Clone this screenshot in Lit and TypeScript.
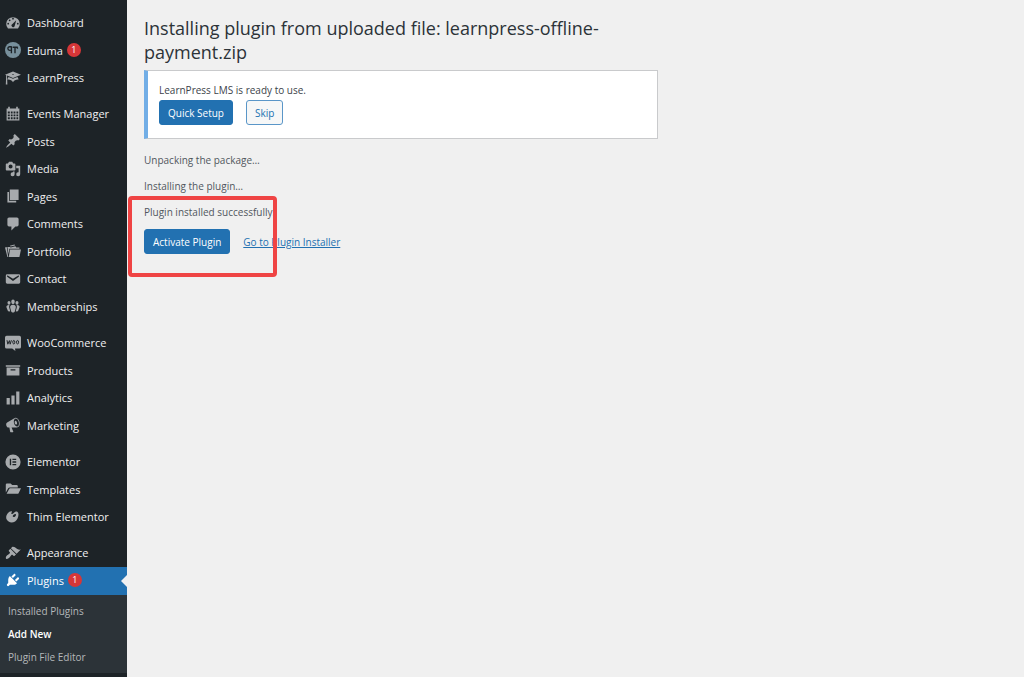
import { LitElement, html, css, svg, nothing } from "lit";
import { customElement, property } from "lit/decorators.js";

const icons: Record<string, unknown> = {
  dashboard: svg`<path fill-rule="evenodd" d="M3.760 17h12.480A8.500 8.500 0 1 0 3.760 17zM10 3.500a1.100 1.100 0 1 1 0 2.200 1.100 1.100 0 0 1 0-2.200zM5.800 5.500a1.100 1.100 0 1 1 0 2.200 1.100 1.100 0 0 1 0-2.200zM14 6.500l-2 7.500a2 2 0 1 1-3-2.500zM4 9.700a1.100 1.100 0 1 1 0 2.200 1.100 1.100 0 0 1 0-2.200zM16 9.700a1.100 1.100 0 1 1 0 2.200 1.100 1.100 0 0 1 0-2.200z"/>`,
  eduma: svg`<circle cx="10" cy="10" r="10" fill="#78909c"/><path d="M8.500 6H5.800a2.200 2.200 0 0 0 0 4.400H7M8 6v8M9.500 6.500H16M12.500 6.500V14M15.500 6.500v2" fill="none" stroke="#1d2327" stroke-width="1.700"/>`,
  learn: svg`<path fill-rule="evenodd" d="M10 10L2.540 7.020 3 18H1l.48-11.410L0 6l10-4 10 4zm0-5c-.55 0-1 .22-1 .5s.45.500 1 .500 1-.22 1-.500-.45-.500-1-.500zm0 6l5.570-2.230c.71.940 1.200 2.070 1.360 3.300-.3-.04-.61-.07-.93-.07-2.550 0-4.780 1.370-6 3.410C8.780 13.370 6.550 12 4 12c-.32 0-.63.030-.93.070.160-1.230.650-2.360 1.360-3.300z"/>`,
  calendar: svg`<path fill-rule="evenodd" d="M2 3h2V1h2v2h8V1h2v2h2v15H2zM3.500 7v2.500H6V7zM7.300 7v2.500h2.200V7zM10.700 7v2.500H13V7zM14.300 7v2.500h2.200V7zM3.500 10.500v2.400H6v-2.400zM7.300 10.500v2.400h2.200v-2.400zM10.700 10.500v2.400H13v-2.400zM14.300 10.500v2.400h2.200v-2.400zM3.500 14v2.500H6V14zM7.300 14v2.500h2.200V14zM10.700 14v2.500H13V14zM14.300 14v2.500h2.200V14z"/>`,
  pin: svg`<path d="M10.440 3.020l1.820-1.820 6.360 6.350-1.830 1.820c-1.050-.68-2.480-.57-3.410.36l-.75.75c-.92.93-1.040 2.350-.35 3.410l-1.830 1.820-2.410-2.410-2.800 2.790c-.42.42-3.380 2.710-3.800 2.290s1.860-3.390 2.280-3.810l2.790-2.790L4.100 9.360l1.830-1.820c1.050.69 2.480.57 3.400-.36l.75-.75c.93-.92 1.050-2.350.36-3.410z"/>`,
  media: svg`<path fill-rule="evenodd" d="M13 11V4c0-.55-.45-1-1-1h-1.670L9 1H5L3.670 3H2c-.55 0-1 .45-1 1v7c0 .55.45 1 1 1h10c.55 0 1-.45 1-1zM7 4.500a2.500 2.500 0 1 1 0 5 2.500 2.500 0 0 1 0-5zM14 6h5v10.500a2.500 2.500 0 1 1-2-2.450V9h-3zM10 14.050V13h2v3.500a2.500 2.500 0 1 1-2-2.450z"/>`,
  page: svg`<path d="M6 15V2h11v13zM5 16h9v2H3V5h2z"/>`,
  comment: svg`<path d="M5 2h10c1.100 0 2 .9 2 2v7c0 1.100-.9 2-2 2h-2l-5 5v-5H5c-1.100 0-2-.9-2-2V4c0-1.100.9-2 2-2z"/>`,
  portfolio: svg`<path d="M0 5.500l2.200-.5L4 17.500H3zM6 3.500L12 2l.5 1.200L7 4.500z"/><path d="M3 5h3l1.200.5L13 4l1 1.500h4V7.200H5.500L4.500 14z"/><path d="M6.200 8H20l-2 9.500H4.700z"/>`,
  mail: svg`<path fill-rule="evenodd" d="M2.800 4h14.400Q19 4 19 5.790v8.420Q19 16 17.200 16H2.800Q1 16 1 14.210V5.790Q1 4 2.800 4zm7.200 8.600l7.200-5.530c.24-.2.43-.66.13-1.070-.29-.41-.82-.42-1.170-.17L10 9.690 3.840 5.830C3.490 5.580 2.960 5.590 2.670 6c-.3.410-.11.870.13 1.070z"/>`,
  groups: svg`<ellipse cx="10" cy="4.800" rx="2.200" ry="3"/><ellipse cx="5" cy="6" rx="1.900" ry="2.400"/><ellipse cx="15" cy="6" rx="1.900" ry="2.400"/><path d="M6.600 12.500C5.800 10 7.300 8.300 10 8.300s4.200 1.700 3.400 4.200l-1.200 4.300c-.6 1.600-3.800 1.600-4.400 0zM5.700 8.800c-.7 1-.7 2.400-.2 3.900L6.600 16.700C5 17 3.800 16.400 3.400 15.500l-1.500-3.600C1 9.800 3 8.500 5.700 8.800zM14.300 8.800c.7 1 .7 2.400.2 3.900l-1.100 4c1.600.3 2.800-.3 3.200-1.200l1.500-3.600c.9-2.100-1.100-3.400-3.800-3.100z"/>`,
  woo: svg`<path d="M2 1h16q2 0 2 2v12q0 2-2 2h-5.500l.5 3-4-3H2q-2 0-2-2V3q0-2 2-2z"/><path d="M2.500 6.500l1 5L5.500 7l1 4.500L8 6.500" fill="none" stroke="#1d2327" stroke-width="1.200"/><ellipse cx="11" cy="9" rx="1.300" ry="2.200" fill="none" stroke="#1d2327" stroke-width="1.200"/><ellipse cx="15.700" cy="9" rx="1.300" ry="2.200" fill="none" stroke="#1d2327" stroke-width="1.200"/>`,
  archive: svg`<path fill-rule="evenodd" d="M19 4v2H1V4zM2 7h16v10H2zm11 3V9H7v1.500h6z"/>`,
  chart: svg`<path d="M18 18V2h-4v16zM12 18V7H8v11zM6 18v-8H2v8z"/>`,
  megaphone: svg`<path fill-rule="evenodd" d="M18.150 5.940c.46 1.620.38 3.220-.02 4.480-.42 1.280-1.260 2.180-2.300 2.480-.3.080-.6.100-1 .1h-6.600l2.220 5.500c.02.140-.06.260-.14.340-.08.100-.24.160-.34.160H6.950c-.1 0-.26-.06-.34-.16-.08-.08-.16-.2-.14-.34l-1-5.500H4.250c-.5.040-1.100-.2-1.560-.64s-.88-1.080-1.060-1.880c-.24-.8-.2-1.560-.02-2.200.18-.62.58-1.080 1.060-1.300l9.020-5.420c.3-.2.600-.36.980-.46 1.040-.3 2.240.1 3.220.98s1.840 2.240 2.260 3.860zm-2.600 5.980c.4-.1.740-.34 1.040-.7.580-.7.860-1.760.86-3.040 0-.64-.1-1.300-.28-1.980-.34-1.360-1.020-2.500-1.780-3.240s-1.680-1.100-2.460-.88c-.82.22-1.400.96-1.700 2-.32 1.040-.28 2.360.06 3.720.38 1.360 1 2.500 1.800 3.240.78.74 1.600 1.100 2.460.88zm-2.520-7.080c.22-.04.42-.02.62.040.38.160.76.480 1.020 1s.42 1.200.42 1.780c0 .9-.4 1.600-.98 1.740-.34.1-.8-.06-1.140-.4s-.64-.86-.78-1.500c-.3-1.200.1-2.500.84-2.660z"/>`,
  elementor: svg`<path fill-rule="evenodd" d="M10 .5a9.500 9.500 0 1 1 0 19 9.500 9.500 0 0 1 0-19zM6 6v8h1.700V6zM9.300 6v1.600H14V6zM9.300 9.200v1.600H14V9.200zM9.300 12.400V14H14v-1.600z"/>`,
  folder: svg`<path d="M1 14.500V4.500Q1 3 2.500 3H7l2 2h5.500Q16 5 16 6.500V8H6Q4.700 8 4 9.200z"/><path d="M2 16L5.200 10Q5.600 9.200 6.500 9.200H20l-3 6Q16.500 16 15.500 16z"/>`,
  palette: svg`<path fill-rule="evenodd" d="M8.550 3.060c1.010.34-1.950 2.010-.1 3.130 1.040.63 3.310-2.220 4.450-2.860.97-.54 2.670-.65 3.530 1.230 1.090 2.380.14 8.570-3.790 11.060-3.970 2.500-8.970 1.230-10.700-2.660-2.010-4.530 3.120-11.090 6.610-9.900zm1.210 6.450c.73 1.640 4.700-.5 3.790-2.800-.59-1.490-4.480 1.250-3.790 2.800z"/>`,
  brush: svg`<path d="M14.480 11.060L7.410 3.990l1.500-1.500c.5-.56 2.300-.47 3.510.32 1.210.8 1.430 1.280 2.910 2.100 1.180.64 2.450 1.260 4.450.85zm-.71.71L6.700 4.700 4.930 6.470c-.39.39-.39 1.020 0 1.410l1.060 1.060c.39.39.39 1.030 0 1.420-.6.6-1.430 1.110-2.210 1.690-.35.26-.7.53-1.010.84C1.430 14.230.4 16.080 1.400 17.070c.99 1 2.840-.03 4.180-1.360.31-.31.58-.66.85-1.020.57-.78 1.080-1.610 1.690-2.210.39-.39 1.020-.39 1.410 0l1.060 1.060c.39.39 1.020.39 1.410 0z"/>`,
  plug: svg`<path d="M13.110 4.360L9.870 7.600 8 5.730l3.240-3.240c.35-.34 1.050-.2 1.560.32.52.51.66 1.210.31 1.550zm-8 1.770l.91-1.120 9.010 9.010-1.190.84c-.71.71-2.630 1.160-3.820 1.160H6.140L4.900 17.260c-.59.59-1.540.59-2.120 0-.59-.58-.59-1.530 0-2.120l1.240-1.240v-3.880c0-1.130.4-3.190 1.090-3.890zm7.260 3.970l3.240-3.240c.34-.35 1.040-.21 1.550.31.52.51.66 1.210.31 1.550l-3.240 3.250z"/>`,
};

interface MenuEntry {
  icon: string;
  label: string;
  count?: number;
  current?: boolean;
}

const groups: MenuEntry[][] = [
  [
    { icon: "dashboard", label: "Dashboard" },
    { icon: "eduma", label: "Eduma", count: 1 },
    { icon: "learn", label: "LearnPress" },
  ],
  [
    { icon: "calendar", label: "Events Manager" },
    { icon: "pin", label: "Posts" },
    { icon: "media", label: "Media" },
    { icon: "page", label: "Pages" },
    { icon: "comment", label: "Comments" },
    { icon: "portfolio", label: "Portfolio" },
    { icon: "mail", label: "Contact" },
    { icon: "groups", label: "Memberships" },
  ],
  [
    { icon: "woo", label: "WooCommerce" },
    { icon: "archive", label: "Products" },
    { icon: "chart", label: "Analytics" },
    { icon: "megaphone", label: "Marketing" },
  ],
  [
    { icon: "elementor", label: "Elementor" },
    { icon: "folder", label: "Templates" },
    { icon: "palette", label: "Thim Elementor" },
  ],
  [
    { icon: "brush", label: "Appearance" },
    { icon: "plug", label: "Plugins", count: 1, current: true },
  ],
];

@customElement("admin-menu")
class AdminMenu extends LitElement {
  @property({ attribute: false }) groups: MenuEntry[][] = [];

  static styles = css`
    :host {
      display: block;
      background: #1d2327;
      color: #f0f0f1;
      padding-top: 10px;
      font-size: 11px;
    }
    ul {
      list-style: none;
      margin: 0;
      padding: 0;
    }
    .group {
      margin-bottom: 9px;
    }
    .group:last-of-type {
      margin-bottom: 0;
    }
    .item {
      box-sizing: border-box;
      display: flex;
      align-items: center;
      gap: 4px;
      height: 27px;
      padding: 0 0 2px 5px;
      color: inherit;
      text-decoration: none;
      white-space: nowrap;
    }
    li:nth-child(even) .item {
      height: 28px;
    }
    .icon {
      width: 16px;
      height: 16px;
      flex: none;
      margin-right: 2px;
      fill: #a7aaad;
    }
    .count {
      display: grid;
      place-items: center;
      width: 14px;
      height: 14px;
      border-radius: 50%;
      background: #d63638;
      color: #fff;
      font-size: 9px;
      line-height: 14px;
    }
    .current {
      position: relative;
      background: #2271b1;
      color: #fff;
    }
    .current .icon {
      fill: #fff;
    }
    .current::after {
      content: "";
      position: absolute;
      right: 0;
      top: 50%;
      margin-top: -6px;
      border: 6px solid transparent;
      border-left-width: 0;
      border-right-color: #f0f0f1;
    }
    .submenu {
      background: #2c3338;
      padding: 5px 0 4px;
    }
    .sub {
      display: block;
      padding-left: 8px;
      font-size: 10px;
      line-height: 23px;
      color: #b5b8ba;
      text-decoration: none;
    }
    .active {
      color: #fff;
      font-weight: 600;
    }
  `;

  render() {
    return html`<nav aria-label="Main menu">
      ${this.groups.map(
        (group) => html`<ul class="group">
          ${group.map(
            (e) => html`<li>
              <a class="item ${e.current ? "current" : ""}" href="#">
                <svg class="icon" viewBox="0 0 20 20" aria-hidden="true">${icons[e.icon]}</svg>
                <span>${e.label}</span>
                ${e.count ? html`<span class="count">${e.count}</span>` : nothing}
              </a>
            </li>`
          )}
        </ul>`
      )}
      <div class="submenu">
        <a class="sub" href="#">Installed Plugins</a>
        <a class="sub active" href="#" aria-current="page">Add New</a>
        <a class="sub" href="#">Plugin File Editor</a>
      </div>
    </nav>`;
  }
}

@customElement("app-root")
class AppRoot extends LitElement {
  static styles = css`
    :host {
      display: grid;
      grid-template-columns: 127px minmax(0, 1fr);
      min-height: 100vh;
      background: #f0f0f0;
      color: #50575e;
      font-family: "Open Sans", "Noto Sans", sans-serif;
      font-size: 10px;
    }
    main {
      padding: 16px 17px;
    }
    .content {
      max-width: 514px;
    }
    h1 {
      margin: 0 0 6px;
      color: #2c3338;
      font-size: 18px;
      font-weight: 400;
      line-height: 24px;
    }
    .notice {
      box-sizing: border-box;
      background: #fff;
      border: 1px solid #c9cacc;
      border-left: 4px solid #72aee6;
      padding: 10px 10px 13px 11px;
    }
    p {
      margin: 0;
      line-height: 18px;
    }
    .strong {
      margin-bottom: 1px;
      color: #3c434a;
      font-weight: 500;
    }
    .actions {
      display: flex;
      align-items: center;
      gap: 13px;
    }
    .button {
      box-sizing: border-box;
      height: 25px;
      padding: 0 8px;
      border: 1px solid #2271b1;
      border-radius: 3px;
      background: #2271b1;
      color: #fff;
      font: inherit;
      white-space: nowrap;
    }
    .secondary {
      background: #f6f7f7;
      border-color: #5a96c8;
      color: #2271b1;
    }
    .log {
      display: grid;
      gap: 8px;
      padding-top: 12px;
    }
    .result {
      position: relative;
      display: grid;
      gap: 8px;
    }
    .result::after {
      content: "";
      box-sizing: border-box;
      position: absolute;
      left: -16px;
      top: -7px;
      width: 149px;
      height: 81px;
      border: 4px solid #ef4444;
      border-radius: 4px;
      pointer-events: none;
    }
    .link {
      color: #2271b1;
    }
  `;

  render() {
    return html`
      <admin-menu .groups=${groups}></admin-menu>
      <main>
        <div class="content">
          <h1>Installing plugin from uploaded file: learnpress-offline-payment.zip</h1>
          <section class="notice">
            <p class="strong">LearnPress LMS is ready to use.</p>
            <div class="actions">
              <button class="button" type="button">Quick Setup</button>
              <button class="button secondary" type="button">Skip</button>
            </div>
          </section>
          <section class="log">
            <p>Unpacking the package…</p>
            <p>Installing the plugin…</p>
            <div class="result">
              <p>Plugin installed successfully.</p>
              <div class="actions">
                <button class="button" type="button">Activate Plugin</button>
                <a class="link" href="#">Go to Plugin Installer</a>
              </div>
            </div>
          </section>
        </div>
      </main>
    `;
  }
}
